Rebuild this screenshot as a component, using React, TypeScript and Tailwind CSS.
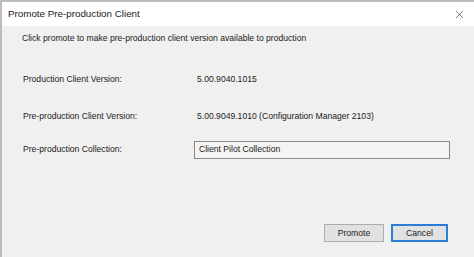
import { X } from "lucide-react";

const rows = [
  { label: "Production Client Version:", value: "5.00.9040.1015" },
  { label: "Pre-production Client Version:", value: "5.00.9049.1010 (Configuration Manager 2103)" },
];

export default function App() {
  return (
    <div
      className="w-[474px] h-[257px] flex flex-col bg-[#f0f0f0] border-l-2 border-t-2 border-[#bdbdbd] overflow-hidden text-[#1b1b1b]"
      style={{ fontFamily: '"Liberation Sans", Arial, sans-serif' }}
    >
      {/* Title bar */}
      <div className="h-[24px] shrink-0 flex items-center justify-between bg-white pl-[6px] pr-[8px]">
        <span className="text-[9.8px]">Promote Pre-production Client</span>
        <X className="w-[13px] h-[13px] text-[#333]" strokeWidth={1.2} />
      </div>

      {/* Body */}
      <div className="flex-1 flex flex-col px-[20px] pt-[6px] text-[8.6px]">
        <p>Click promote to make pre-production client version available to production</p>

        <div className="flex flex-col mt-[28px] gap-[23px]">
          {rows.map((r) => (
            <div key={r.label} className="flex items-center h-[14px]">
              <span className="w-[175px] pl-[1px]">{r.label}</span>
              <span>{r.value}</span>
            </div>
          ))}
          <div className="flex items-center -mt-[6px]">
            <span className="w-[172px] pl-[1px]">Pre-production Collection:</span>
            <div className="w-[256px] h-[18px] border border-[#8a8a8a] bg-[#f4f4f4] flex items-center pl-[4px]">
              Client Pilot Collection
            </div>
          </div>
        </div>

        <div className="flex-1" />

        <div className="flex justify-end gap-[7px] pr-[6px] pb-[15px]">
          <button className="w-[60px] h-[18px] bg-[#e1e1e1] border border-[#adadad] text-[8.6px]">
            Promote
          </button>
          <button className="w-[57px] h-[18px] bg-[#e1e1e1] border-2 border-[#2a7fd4] text-[8.6px]">
            Cancel
          </button>
        </div>
      </div>
    </div>
  );
}
